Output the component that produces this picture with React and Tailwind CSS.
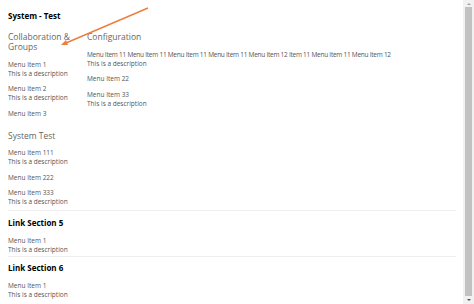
import React from "react";

const Item = ({ title, desc, tight }) => (
  <div className="flex flex-col">
    <div
      className={
        "text-[6.5px] leading-[9px] text-[#555] whitespace-nowrap " +
        (tight ? "tracking-[-0.26px]" : "")
      }
    >
      {title}
    </div>
    {desc && <div className="text-[6.5px] leading-[9px] text-[#555] whitespace-nowrap">{desc}</div>}
  </div>
);

const Group = ({ title, items, className = "" }) => (
  <div className={"flex flex-col " + className}>
    <div className="text-[8.5px] leading-[10px] text-[#666] mb-[7.5px]">{title}</div>
    <div className="flex flex-col gap-[6.5px]">
      {items.map((it, i) => (
        <Item key={i} {...it} />
      ))}
    </div>
  </div>
);

export default function App() {
  const d = "This is a description";
  return (
    <div
      className="relative w-[474px] h-[304px] overflow-hidden bg-white flex"
      style={{ fontFamily: '"Open Sans", sans-serif' }}
    >
      <div className="flex-1 flex flex-col pl-[8px] pr-[7px] pt-[11px]">
        <div className="text-[8px] leading-[10px] font-bold text-black">System - Test</div>
        <div className="flex mt-[11px]">
          <div className="w-[79px] flex flex-col">
            <Group
              title={<>Collaboration &amp;<br />Groups</>}
              items={[
                { title: "Menu Item 1", desc: d },
                { title: "Menu Item 2", desc: d },
                { title: "Menu Item 3" },
              ]}
            />
            <Group
              className="mt-[13px]"
              title="System Test"
              items={[
                { title: "Menu Item 111", desc: d },
                { title: "Menu Item 222" },
                { title: "Menu Item 333", desc: d },
              ]}
            />
          </div>
          <div className="flex-1">
            <Group
              title="Configuration"
              items={[
                {
                  title:
                    "Menu Item 11 Menu Item 11 Menu Item 11 Menu Item 11 Menu Item 12 Item 11 Menu Item 11 Menu Item 12",
                  desc: d,
                  tight: true,
                },
                { title: "Menu Item 22" },
                { title: "Menu Item 33", desc: d },
              ]}
            />
          </div>
        </div>
        <div className="h-px bg-[#efefef] mt-[4px]" />
        <div className="pt-[6.5px] pb-[2px]">
          <div className="text-[8px] leading-[10px] font-bold text-black mb-[8px]">Link Section 5</div>
          <Item title="Menu Item 1" desc={d} />
        </div>
        <div className="h-px bg-[#efefef]" />
        <div className="pt-[6.5px]">
          <div className="text-[8px] leading-[10px] font-bold text-black mb-[8px]">Link Section 6</div>
          <Item title="Menu Item 1" desc={d} />
        </div>
      </div>
      <div className="w-[11px] h-full bg-[#f1f1f1] flex flex-col items-center">
        <div className="h-[7px] flex items-center justify-center">
          <div className="w-0 h-0 border-l-[2px] border-r-[2px] border-b-[2px] border-l-transparent border-r-transparent border-b-[#a3a3a3]" />
        </div>
        <div className="w-[7px] flex-1 bg-[#c1c1c1]" />
        <div className="h-[8px] flex items-center justify-center">
          <div className="w-0 h-0 border-l-[2px] border-r-[2px] border-t-[2px] border-l-transparent border-r-transparent border-t-[#505050]" />
        </div>
      </div>
      <svg className="absolute left-0 top-0 pointer-events-none" width="474" height="304">
        <line x1="148" y1="8" x2="66" y2="43" stroke="#ef7d3c" strokeWidth="1.4" />
        <polygon points="61,45 66,40 68,45" fill="#ef7d3c" />
      </svg>
    </div>
  );
}
